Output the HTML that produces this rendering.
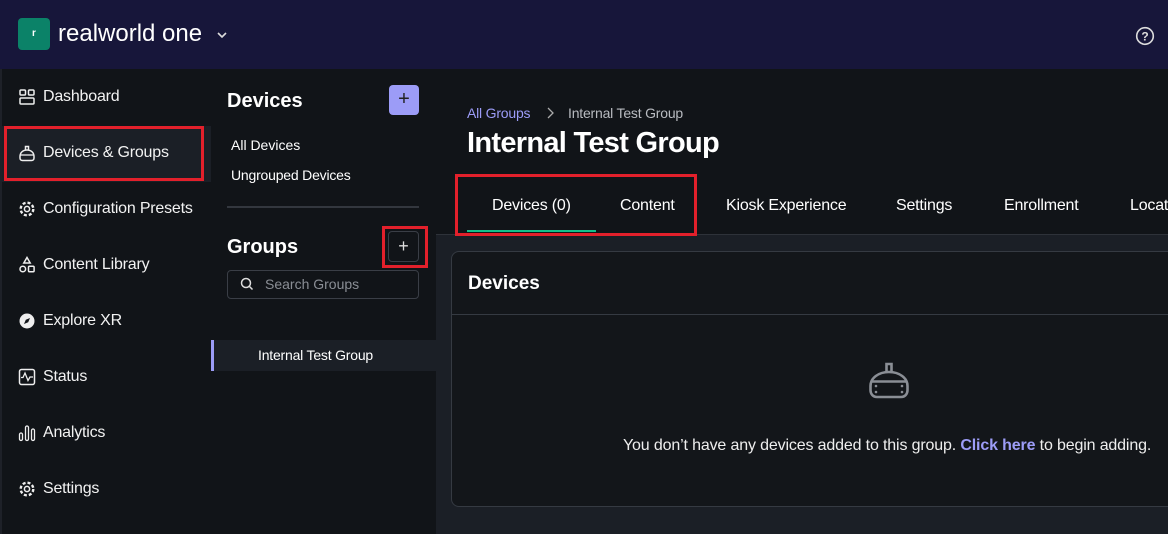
<!DOCTYPE html>
<html><head><style>
*{box-sizing:border-box;margin:0;padding:0}
body{width:1168px;height:534px;overflow:hidden;background:#111418;font-family:"Liberation Sans",sans-serif;color:#fff;position:relative}
.abs{position:absolute}
.hdr{left:0;top:0;width:1168px;height:69px;background:#17163a}
.nav{left:0;top:69px;width:211px;height:465px;background:#111418;border-left:2px solid #1e2128}
.ni{position:absolute;left:16px;font-size:16px;display:flex;align-items:center;gap:7px;color:#f2f2f2;white-space:nowrap;letter-spacing:-0.2px}
.ni svg{width:18px;height:18px;flex-shrink:0}
.mid{left:211px;top:69px;width:225px;height:465px;background:#111418}
.red{position:absolute;border:3px solid #e3202b}
.tab{position:absolute;top:197px;font-size:16px;letter-spacing:-0.2px;white-space:nowrap}
</style></head><body>
<div class="abs hdr">
  <div class="abs" style="left:18px;top:18px;width:32px;height:32px;background:#0b8268;border-radius:4px;color:#fff;font-size:10px;font-weight:bold;text-align:center;line-height:32px">r</div>
  <div class="abs" style="left:58px;top:20px;font-size:24px;color:#fff">realworld one</div>
  <svg class="abs" style="left:216px;top:31px" width="12" height="8" viewBox="0 0 12 8"><path d="M2 2l4 4 4-4" stroke="#ddd" stroke-width="1.6" fill="none"/></svg>
  <svg class="abs" style="left:1135px;top:26px" width="20" height="20" viewBox="0 0 20 20"><circle cx="10" cy="10" r="8.3" stroke="#ddd" stroke-width="1.6" fill="none"/><text x="10" y="14.3" font-size="12" font-weight="bold" fill="#ddd" text-anchor="middle" font-family="Liberation Sans">?</text></svg>
</div>
<div class="abs nav">
  <div class="abs" style="left:0;top:57px;width:209px;height:56px;background:#1b1f26"></div>
  <div class="ni" style="top:19px"><svg viewBox="0 0 18 18"><rect x="2" y="2" width="5.5" height="5" rx="1" stroke="#eee" fill="none" stroke-width="1.5"/><rect x="10.5" y="2" width="5.5" height="5" rx="1" stroke="#eee" fill="none" stroke-width="1.5"/><rect x="2" y="10" width="14" height="6" rx="1" stroke="#eee" fill="none" stroke-width="1.5"/></svg>Dashboard</div>
  <div class="ni" style="top:75px"><svg viewBox="0 0 18 18"><path d="M7.5 2.5h3v3.5h-3zM2 12.5c0-4 3-6.5 7-6.5s7 2.5 7 6.5v1.5c0 1.5-1 2.5-2.5 2.5h-9c-1.5 0-2.5-1-2.5-2.5z" stroke="#eee" fill="none" stroke-width="1.5"/><path d="M2 11h14" stroke="#eee" stroke-width="1.3"/></svg>Devices &amp; Groups</div>
  <div class="ni" style="top:131px"><svg viewBox="0 0 18 18"><circle cx="9" cy="9" r="2.6" stroke="#eee" fill="none" stroke-width="1.5"/><circle cx="9" cy="9" r="6.3" stroke="#eee" fill="none" stroke-width="2.4" stroke-dasharray="3 2"/></svg>Configuration Presets</div>
  <div class="ni" style="top:187px"><svg viewBox="0 0 18 18"><path d="M9 1.5l3.2 5.5h-6.4z" stroke="#eee" fill="none" stroke-width="1.5"/><circle cx="4.8" cy="13" r="2.8" stroke="#eee" fill="none" stroke-width="1.5"/><rect x="10.5" y="10.2" width="5.6" height="5.6" rx="1" stroke="#eee" fill="none" stroke-width="1.5"/></svg>Content Library</div>
  <div class="ni" style="top:243px"><svg viewBox="0 0 18 18"><circle cx="9" cy="9" r="7.5" fill="#eee"/><path d="M12 6l-1.8 4.2-4.2 1.8 1.8-4.2z" fill="#111418"/></svg>Explore XR</div>
  <div class="ni" style="top:299px"><svg viewBox="0 0 18 18"><rect x="1.5" y="1.5" width="15" height="15" rx="2" stroke="#eee" fill="none" stroke-width="1.5"/><path d="M3 9.5h2l2-4.5 3 7.5 2-3.5h3" stroke="#eee" fill="none" stroke-width="1.3"/></svg>Status</div>
  <div class="ni" style="top:355px"><svg viewBox="0 0 18 18"><rect x="1.5" y="9" width="3" height="7.5" rx="1.5" stroke="#eee" fill="none" stroke-width="1.3"/><rect x="7.5" y="2" width="3" height="14.5" rx="1.5" stroke="#eee" fill="none" stroke-width="1.3"/><rect x="13.5" y="5" width="3" height="11.5" rx="1.5" stroke="#eee" fill="none" stroke-width="1.3"/></svg>Analytics</div>
  <div class="ni" style="top:411px"><svg viewBox="0 0 18 18"><circle cx="9" cy="9" r="2.6" stroke="#eee" fill="none" stroke-width="1.5"/><circle cx="9" cy="9" r="6.3" stroke="#eee" fill="none" stroke-width="2.4" stroke-dasharray="3 2"/></svg>Settings</div>
</div>
<div class="red" style="left:4px;top:126px;width:200px;height:55px"></div>
<div class="abs mid">
  <div class="abs" style="left:16px;top:21px;font-size:20px;font-weight:bold">Devices</div>
  <div class="abs" style="left:178px;top:16px;width:30px;height:30px;background:#9c9cf7;border-radius:4px;color:#222;text-align:center;line-height:29px;font-size:20px">+</div>
  <div class="abs" style="left:20px;top:68px;font-size:14px">All Devices</div>
  <div class="abs" style="left:20px;top:98px;font-size:14px;letter-spacing:-0.2px">Ungrouped Devices</div>
  <div class="abs" style="left:16px;top:137px;width:192px;height:2px;background:#33373e"></div>
  <div class="abs" style="left:16px;top:167px;font-size:20px;font-weight:bold">Groups</div>
  <div class="abs" style="left:177px;top:162px;width:31px;height:31px;border:1px solid #3a3e46;border-radius:4px;color:#ddd;text-align:center;line-height:28px;font-size:18px">+</div>
  <div class="abs" style="left:16px;top:201px;width:192px;height:29px;border:1px solid #3a3e46;border-radius:4px"></div>
  <svg class="abs" style="left:29px;top:208px" width="14" height="14" viewBox="0 0 14 14"><circle cx="6" cy="6" r="4.5" stroke="#ddd" stroke-width="1.5" fill="none"/><path d="M9.5 9.5l3 3" stroke="#ddd" stroke-width="1.5"/></svg>
  <div class="abs" style="left:54px;top:207px;font-size:14px;color:#8a8e95">Search Groups</div>
  <div class="abs" style="left:0;top:271px;width:225px;height:31px;background:#1b1f26;border-left:3px solid #9c9cf7"></div>
  <div class="abs" style="left:47px;top:278px;font-size:14px;letter-spacing:-0.2px">Internal Test Group</div>
</div>
<div class="red" style="left:382px;top:226px;width:46px;height:42px"></div>
<div class="abs" style="left:436px;top:69px;width:732px;height:465px;background:#111418"></div>
<div class="abs" style="left:436px;top:234px;width:732px;height:300px;background:#1b1f26;border-top:1px solid #2e3239"></div>
<div class="abs" style="left:467px;top:105px;font-size:14px;color:#9c9cf7;letter-spacing:-0.2px">All Groups</div>
<svg class="abs" style="left:545px;top:107px" width="10" height="12" viewBox="0 0 10 12"><path d="M3 1l5 5-5 5" stroke="#aaa" stroke-width="1.3" fill="none"/></svg>
<div class="abs" style="left:568px;top:105px;font-size:14px;color:#b8bbc0;letter-spacing:-0.2px">Internal Test Group</div>
<div class="abs" style="left:467px;top:127px;font-size:29px;font-weight:bold;letter-spacing:-0.7px">Internal Test Group</div>
<div class="tab" style="left:492px">Devices (0)</div>
<div class="abs" style="left:467px;top:230px;width:129px;height:2px;background:#14c08a"></div>
<div class="tab" style="left:620px">Content</div>
<div class="tab" style="left:726px">Kiosk Experience</div>
<div class="tab" style="left:896px">Settings</div>
<div class="tab" style="left:1004px">Enrollment</div>
<div class="tab" style="left:1130px">Locat</div>
<div class="red" style="left:455px;top:174px;width:242px;height:62px"></div>
<div class="abs" style="left:451px;top:251px;width:730px;height:256px;background:#13161a;border:1px solid #353a42;border-radius:8px">
  <div class="abs" style="left:16px;top:21px;font-size:19px;font-weight:bold">Devices</div>
  <div class="abs" style="left:0;top:62px;width:730px;height:1px;background:#353a42"></div>
</div>
<svg class="abs" style="left:868px;top:361px" width="42" height="40" viewBox="0 0 42 40"><path d="M18.5 3h5v8h-5zM2.5 25c0-8 8-14 18.5-14s18.5 6 18.5 14v4c0 4-2.5 7-6.5 7h-24c-4 0-6.5-3-6.5-7z" stroke="#8a8e95" stroke-width="2.6" fill="none"/><path d="M2.5 20.5h37" stroke="#8a8e95" stroke-width="2.4"/><circle cx="8" cy="25" r="1.3" fill="#8a8e95"/><circle cx="34" cy="25" r="1.3" fill="#8a8e95"/><circle cx="8" cy="31" r="1.3" fill="#8a8e95"/><circle cx="34" cy="31" r="1.3" fill="#8a8e95"/></svg>
<div class="abs" style="left:623px;top:437px;font-size:16px;color:#eee;letter-spacing:-0.15px;white-space:nowrap">You don’t have any devices added to this group. <b style="color:#9c9cf7">Click here</b> to begin adding.</div>
</body></html>
